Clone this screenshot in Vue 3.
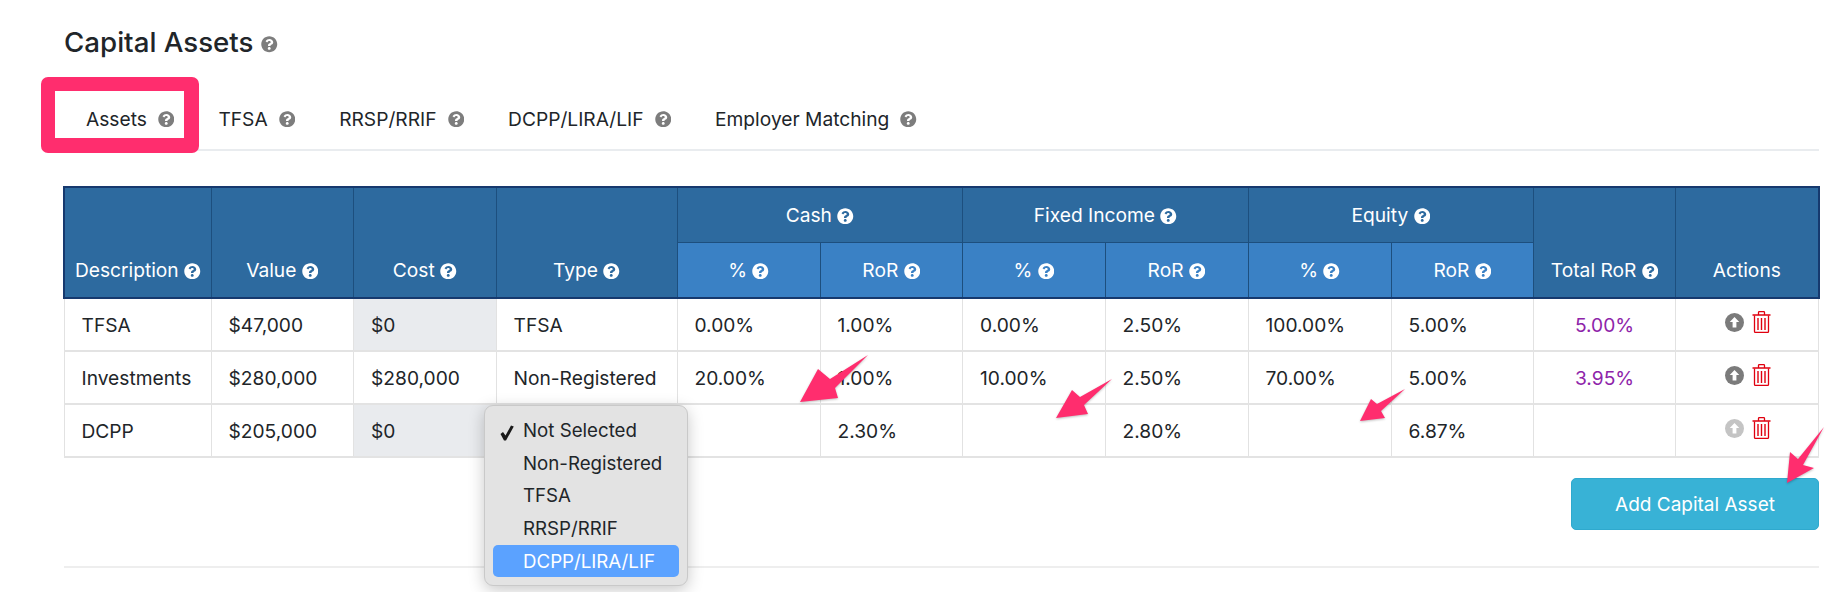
<script setup>
const qPath = 'M504 256c0 137-111 248-248 248S8 393 8 256C8 119 119 8 256 8s248 111 248 248zM262.700 90c-54.500 0-89.300 23-116.600 63.800-3.500 5.300-2.400 12.400 2.700 16.200l34.700 26.300c5.200 4 12.600 3 16.700-2.100 17.900-22.700 30.100-35.800 57.300-35.800 20.400 0 45.700 13.100 45.700 33 0 15-12.400 22.700-32.500 34C247.100 238.500 216 254.900 216 296v4c0 6.600 5.400 12 12 12h56c6.600 0 12-5.400 12-12v-1.300c0-28.500 83.200-29.700 83.200-106.700 0-58-60.200-102-116.500-102zM256 338c-25.400 0-46 20.600-46 46s20.600 46 46 46 46-20.600 46-46-20.600-46-46-46z'

const tabs = ['Assets', 'TFSA', 'RRSP/RRIF', 'DCPP/LIRA/LIF', 'Employer Matching']
const colWidths = [147, 142.500, 142.500, 181, 143, 142.500, 142.500, 143, 143, 142.500, 142, 143]
const subHeads = ['%', 'RoR', '%', 'RoR', '%', 'RoR']

const rows = [
  { name: 'TFSA', value: '$47,000', cost: '$0', locked: true, type: 'TFSA', pct: ['0.00%', '1.00%', '0.00%', '2.50%', '100.00%', '5.00%'], total: '5.00%', faded: false },
  { name: 'Investments', value: '$280,000', cost: '$280,000', locked: false, type: 'Non-Registered', pct: ['20.00%', '1.00%', '10.00%', '2.50%', '70.00%', '5.00%'], total: '3.95%', faded: false },
  { name: 'DCPP', value: '$205,000', cost: '$0', locked: true, type: '', pct: ['', '2.30%', '', '2.80%', '', '6.87%'], total: '', faded: true }
]

const options = ['Not Selected', 'Non-Registered', 'TFSA', 'RRSP/RRIF', 'DCPP/LIRA/LIF']

const arrows = [
  '800,402 818,369 830,379 868,355 835,388 838,398',
  '1056,418 1072,390 1080,397 1112,379 1084,405 1088,414',
  '1360,421 1371,399 1377,404 1405,389 1381,411 1385,418',
  '1787,483 1790,452 1798,459 1824,427 1803,465 1814,468'
]
</script>

<template>
  <main class="page">
    <h2 class="title">
      Capital Assets
      <svg class="q q-gray" viewBox="0 0 512 512"><path :d="qPath" /></svg>
    </h2>

    <nav class="tabs">
      <div v-for="tab in tabs" :key="tab" class="tab">
        {{ tab }}
        <svg class="q q-gray" viewBox="0 0 512 512"><path :d="qPath" /></svg>
      </div>
    </nav>

    <table class="assets">
      <colgroup>
        <col v-for="(w, i) in colWidths" :key="i" :style="{ width: w + 'px' }" />
      </colgroup>
      <thead>
        <tr class="group-row">
          <th v-for="h in ['Description', 'Value', 'Cost', 'Type']" :key="h" rowspan="2" class="tall">
            {{ h }} <svg class="q" viewBox="0 0 512 512"><path :d="qPath" /></svg>
          </th>
          <th v-for="h in ['Cash', 'Fixed Income', 'Equity']" :key="h" colspan="2">
            {{ h }} <svg class="q" viewBox="0 0 512 512"><path :d="qPath" /></svg>
          </th>
          <th rowspan="2" class="tall">
            Total RoR <svg class="q" viewBox="0 0 512 512"><path :d="qPath" /></svg>
          </th>
          <th rowspan="2" class="tall">Actions</th>
        </tr>
        <tr class="sub-row">
          <th v-for="(h, i) in subHeads" :key="i" class="sub">
            {{ h }} <svg class="q" viewBox="0 0 512 512"><path :d="qPath" /></svg>
          </th>
        </tr>
      </thead>
      <tbody>
        <tr v-for="row in rows" :key="row.name">
          <td>{{ row.name }}</td>
          <td>{{ row.value }}</td>
          <td :class="{ locked: row.locked }">{{ row.cost }}</td>
          <td>{{ row.type }}</td>
          <td v-for="(p, i) in row.pct" :key="i">{{ p }}</td>
          <td class="total">{{ row.total }}</td>
          <td class="actions">
            <div class="action-icons">
              <svg class="up" :class="{ faded: row.faded }" viewBox="0 0 20 20">
                <circle cx="10" cy="10" r="10" />
                <path d="M10 4.200 15 9.600H12V15.200H8V9.600H5Z" fill="#fff" />
              </svg>
              <svg class="trash" viewBox="0 0 19 22" fill="none" stroke="#e0000f" stroke-width="1.300">
                <path d="M0.500 4H18.500M6.500 4V1.500Q6.500 0.600 7.400 0.600H11.600Q12.500 0.600 12.500 1.500V4" />
                <path d="M2.500 4.500V20.500Q2.500 21.400 3.400 21.400H15.600Q16.500 21.400 16.500 20.500V4.500" />
                <path d="M6 7V19M9.500 7V19M13 7V19" stroke-width="1.400" />
              </svg>
            </div>
          </td>
        </tr>
      </tbody>
    </table>

    <div class="button-row">
      <button class="add-btn">Add Capital Asset</button>
    </div>

    <hr class="rule" />

    <!-- native select popup -->
    <ul class="popup">
      <li v-for="(opt, i) in options" :key="opt" :class="{ picked: i === 4 }">
        <svg v-if="i === 0" class="check" viewBox="0 0 14 16"><path d="M0.500 9 3 7 5.500 10.500 11 0.500 13.800 1.500 6 15.500H4Z" /></svg>
        {{ opt }}
      </li>
    </ul>

    <!-- annotations drawn on top of the screenshot -->
    <div class="highlight"></div>
    <svg class="marks" width="1846" height="592" viewBox="0 0 1846 592">
      <polygon v-for="pts in arrows" :key="pts" :points="pts" />
    </svg>
  </main>
</template>

<style scoped>
.page {
  position: relative;
  width: 1846px;
  height: 592px;
  box-sizing: border-box;
  padding: 25px 27px 0 64px;
  overflow: hidden;
  background: #fff;
  font-family: Inter, "Liberation Sans", sans-serif;
  font-size: 19.200px;
  color: #212529;
}

.title {
  margin: 0;
  font-size: 27.700px;
  line-height: 34px;
  font-weight: 500;
  display: flex;
  align-items: center;
  gap: 8px;
}

.q {
  width: 16.500px;
  height: 16.500px;
  vertical-align: -2px;
  fill: #fff;
}

.q-gray {
  fill: #7d7d7d;
}

.title .q {
  margin-top: 5px;
}

.tabs {
  display: flex;
  margin-top: 29px;
  border-bottom: 2px solid #e9ecef;
}

.tab {
  display: flex;
  align-items: center;
  gap: 11px;
  padding: 19px 22px 18px;
  line-height: 24px;
  white-space: nowrap;
}

.assets {
  margin-top: 35px;
  margin-left: -1px;
  width: 1755px;
  table-layout: fixed;
  border-collapse: collapse;
  border: 1px solid #b5b5b5;
}

.assets th {
  background: #2d6a9f;
  color: #fff;
  font-weight: 400;
  border: 1px solid #1d4f7e;
  line-height: 24px;
  padding: 0;
  text-align: center;
  white-space: nowrap;
}

.assets thead {
  border: 2px solid #16396e;
}

.assets th.tall {
  vertical-align: bottom;
  padding-bottom: 15px;
}

.assets th.sub {
  background: #3a81c5;
}

.group-row,
.sub-row {
  height: 55.500px;
}

.assets td {
  height: 53px;
  box-sizing: border-box;
  padding: 0 17px;
  border-left: 1px solid #e2e2e2;
  border-right: 1px solid #e2e2e2;
  border-bottom: 2px solid #e3e3e3;
  white-space: nowrap;
}

.assets td.locked {
  background: #e9ebee;
}

.assets td.total {
  text-align: center;
  color: #8e24aa;
}

.action-icons {
  display: flex;
  justify-content: center;
  align-items: center;
  gap: 8px;
  margin-top: -5px;
  margin-left: 2px;
}

.up {
  width: 19px;
  height: 19px;
  fill: #7b7b7b;
}

.up.faded {
  fill: #c4c4c4;
}

.trash {
  width: 19px;
  height: 22px;
}

.button-row {
  display: flex;
  justify-content: flex-end;
  margin-top: 20px;
}

.add-btn {
  width: 248px;
  height: 52px;
  background: #38b2d6;
  border: 1px solid #2fa9ce;
  border-radius: 5px;
  color: #fff;
  font-family: inherit;
  font-size: 19px;
}

.rule {
  margin: 36px 0 0;
  border: 0;
  border-top: 2px solid #eeeeee;
}

.popup {
  position: absolute;
  left: 484px;
  top: 405px;
  width: 204px;
  height: 181px;
  box-sizing: border-box;
  margin: 0;
  padding: 8px;
  list-style: none;
  background: #e3e3e3;
  border: 1px solid #c9c9c9;
  border-radius: 9px;
  box-shadow: 0 4px 16px rgba(0, 0, 0, 0.22);
  font-size: 18.700px;
}

.popup li {
  position: relative;
  height: 32.700px;
  line-height: 34px;
  padding-left: 30px;
  border-radius: 5px;
  white-space: nowrap;
}

.popup li.picked {
  background: #5ba2ff;
  color: #fff;
}

.check {
  position: absolute;
  left: 7px;
  top: 11px;
  width: 14px;
  height: 16px;
  fill: #1a1a1a;
}

.highlight {
  position: absolute;
  left: 41px;
  top: 77px;
  width: 158px;
  height: 76px;
  box-sizing: border-box;
  border: solid #ff2d6e;
  border-width: 14px 15px 15px 14px;
  border-radius: 7px;
}

.marks {
  position: absolute;
  left: 0;
  top: 0;
  pointer-events: none;
}

.marks polygon {
  fill: #ff2d6e;
  filter: drop-shadow(0 1px 1px rgba(0, 0, 0, 0.25));
}
</style>
